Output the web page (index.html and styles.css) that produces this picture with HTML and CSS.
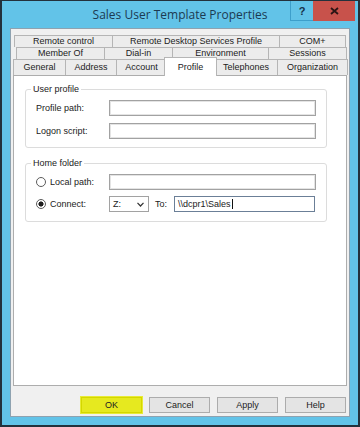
FILE: index.html
```html
<!DOCTYPE html>
<html>
<head>
<meta charset="utf-8">
<link rel="stylesheet" href="styles.css">
</head>
<body>
<div class="window">
  <div class="titlebar">
    <div></div>
    <div class="title">Sales User Template Properties</div>
    <div class="caption">
      <div class="cap-help">?</div>
      <div class="cap-close"><svg width="9" height="8" viewBox="0 0 9 8"><path d="M1 1 L8 7 M8 1 L1 7" stroke="#2a1414" stroke-width="1.8" fill="none"/></svg></div>
    </div>
  </div>
  <div class="client">
    <div class="tabrow row1">
      <div class="tab first">Remote control</div>
      <div class="tab">Remote Desktop Services Profile</div>
      <div class="tab">COM+</div>
    </div>
    <div class="tabrow row2">
      <div class="tab first">Member Of</div>
      <div class="tab">Dial-in</div>
      <div class="tab">Environment</div>
      <div class="tab">Sessions</div>
    </div>
    <div class="tabrow row3">
      <div class="tab first">General</div>
      <div class="tab">Address</div>
      <div class="tab">Account</div>
      <div class="tab active">Profile</div>
      <div class="tab">Telephones</div>
      <div class="tab">Organization</div>
    </div>
    <div class="panel">
      <fieldset class="group g1">
        <legend>User profile</legend>
        <div class="field"><span class="lbl">Profile path:</span><span class="input wide"></span></div>
        <div class="field"><span class="lbl">Logon script:</span><span class="input wide"></span></div>
      </fieldset>
      <fieldset class="group g2">
        <legend>Home folder</legend>
        <div class="field"><span class="lbl radio"><span class="dot"></span>Local path:</span><span class="input wide"></span></div>
        <div class="field"><span class="lbl radio"><span class="dot checked"></span>Connect:</span><span class="select"><span>Z:</span><svg width="7" height="5" viewBox="0 0 7 5"><path d="M0.5 0.8 L3.5 4 L6.5 0.8" stroke="#333" stroke-width="1.2" fill="none"/></svg></span><span class="to">To:</span><span class="input path">\\dcpr1\Sales<span class="caret"></span></span></div>
      </fieldset>
    </div>
    <div class="buttons">
      <div class="btn ok">OK</div>
      <div class="btn">Cancel</div>
      <div class="btn">Apply</div>
      <div class="btn">Help</div>
    </div>
  </div>
</div>
</body>
</html>
```
FILE: styles.css
```css
* { box-sizing: border-box; }
html, body { margin: 0; padding: 0; }
body {
  width: 360px;
  height: 427px;
  overflow: hidden;
  background: #23313c;
  font-family: "Liberation Sans", Arial, sans-serif;
  font-size: 9px;
  color: #222;
}
.window {
  width: 360px;
  height: 427px;
  background: #62c3e8;
  border: 2px solid #23313c;
  border-top-width: 1px;
  display: flex;
  flex-direction: column;
}
.titlebar {
  flex: none;
  height: 27px;
  display: grid;
  grid-template-columns: 1fr auto 1fr;
}
.title {
  align-self: center;
  font-family: "Open Sans", "Liberation Sans", sans-serif;
  font-size: 12px;
  color: #1c3a52;
  white-space: nowrap;
}
.caption {
  justify-self: end;
  display: flex;
  height: 20px;
  margin-right: 3px;
}
.cap-help {
  width: 23px;
  height: 20px;
  border: 1px solid #3d9fcb;
  border-top: none;
  border-right: none;
  display: flex;
  align-items: center;
  justify-content: center;
  font-family: "Liberation Sans", Arial, sans-serif;
  font-weight: bold;
  font-size: 11px;
  color: #16314a;
}
.cap-close {
  width: 42px;
  height: 20px;
  background: #c8524b;
  display: flex;
  align-items: center;
  justify-content: center;
}
.client {
  flex: 1;
  margin: 0 8px 8px;
  background: #f0f0f0;
  border: 1px solid #8ea2b0;
  display: flex;
  flex-direction: column;
  padding: 6px 0 3px;
}
.tabrow {
  flex: none;
  display: flex;
}
.row1 { height: 12px; margin-left: 3px; }
.row2 { height: 12px; margin-left: 5px; }
.row3 { height: 16px; margin-left: 2px; align-items: flex-end; position: relative; z-index: 2; }
.tab {
  flex: none;
  border: 1px solid #b5b5b5;
  border-bottom: none;
  margin-left: -1px;
  background: #ececec;
  text-align: center;
  line-height: 11px;
  white-space: nowrap;
}
.tab.first { margin-left: 0; }
.row1 .tab:nth-child(1) { width: 99px; }
.row1 .tab:nth-child(2) { width: 168px; }
.row1 .tab:nth-child(3) { width: 67px; }
.row2 .tab:nth-child(1) { width: 89px; }
.row2 .tab:nth-child(2) { width: 69px; }
.row2 .tab:nth-child(3) { width: 97px; }
.row2 .tab:nth-child(4) { width: 79px; }
.row3 .tab:nth-child(1) { width: 53px; }
.row3 .tab:nth-child(2) { width: 52px; }
.row3 .tab:nth-child(3) { width: 51px; }
.row3 .tab:nth-child(4) { width: 53px; }
.row3 .tab:nth-child(5) { width: 64px; }
.row3 .tab:nth-child(6) { width: 71px; }
.row3 .tab { height: 16px; line-height: 15px; }
.row3 .tab.active {
  height: 19px;
  line-height: 18px;
  background: #fff;
  margin: 0 -2px -1px -3px;
  position: relative;
  z-index: 3;
}
.panel {
  flex: 1;
  margin: 0 2px;
  background: #fff;
  border: 1px solid #adadad;
  padding: 8px 19px 0 11px;
}
.group {
  margin: 0;
  min-width: 0;
  border: 1px solid #dcdcdc;
  border-radius: 3px;
  padding: 5px 10px 8px 10px;
  display: flex;
  flex-direction: column;
  gap: 7px;
}
.g2 { margin-top: 10px; gap: 6px; padding-bottom: 9px; }
legend {
  padding: 0 2px;
  margin-left: -5px;
  line-height: 11px;
  font-size: 9px;
}
.field {
  display: flex;
  align-items: center;
  height: 16px;
}
.lbl {
  width: 73px;
  flex: none;
}
.radio {
  display: flex;
  align-items: center;
  gap: 4px;
}
.dot {
  width: 10px;
  height: 10px;
  border: 1px solid #5c5c5c;
  border-radius: 50%;
  background: #fff;
  flex: none;
}
.dot.checked {
  background: radial-gradient(circle, #1e1e1e 0 2.2px, #fff 2.9px);
}
.input {
  height: 16px;
  border: 1px solid #a2a2a2;
  background: #fff;
  box-shadow: inset 0 0 0 1px #e4e4e4;
  flex: none;
}
.input.wide { width: 207px; }
.select {
  width: 40px;
  height: 16px;
  border: 1px solid #a2a2a2;
  background: #fff;
  display: flex;
  align-items: center;
  justify-content: space-between;
  padding: 0 4px 0 3px;
  flex: none;
}
.to {
  width: 25px;
  padding-left: 6px;
  flex: none;
}
.input.path {
  width: 141px;
  border-color: #6b7f97;
  box-shadow: none;
  display: flex;
  align-items: center;
  padding-left: 3px;
  white-space: nowrap;
}
.caret {
  display: inline-block;
  width: 1px;
  height: 10px;
  background: #111;
  margin-left: 1px;
}
.buttons {
  flex: none;
  display: flex;
  justify-content: flex-end;
  gap: 7px;
  height: 16px;
  margin: 11px 3px 0 0;
}
.btn {
  width: 61px;
  height: 16px;
  border: 1px solid #acacac;
  background: #e4e4e4;
  display: flex;
  align-items: center;
  justify-content: center;
}
.btn.ok {
  background: #e6e91f;
  border-color: #d4d700;
  box-shadow: 0 0 0 1px #e8eb35;
}
```
